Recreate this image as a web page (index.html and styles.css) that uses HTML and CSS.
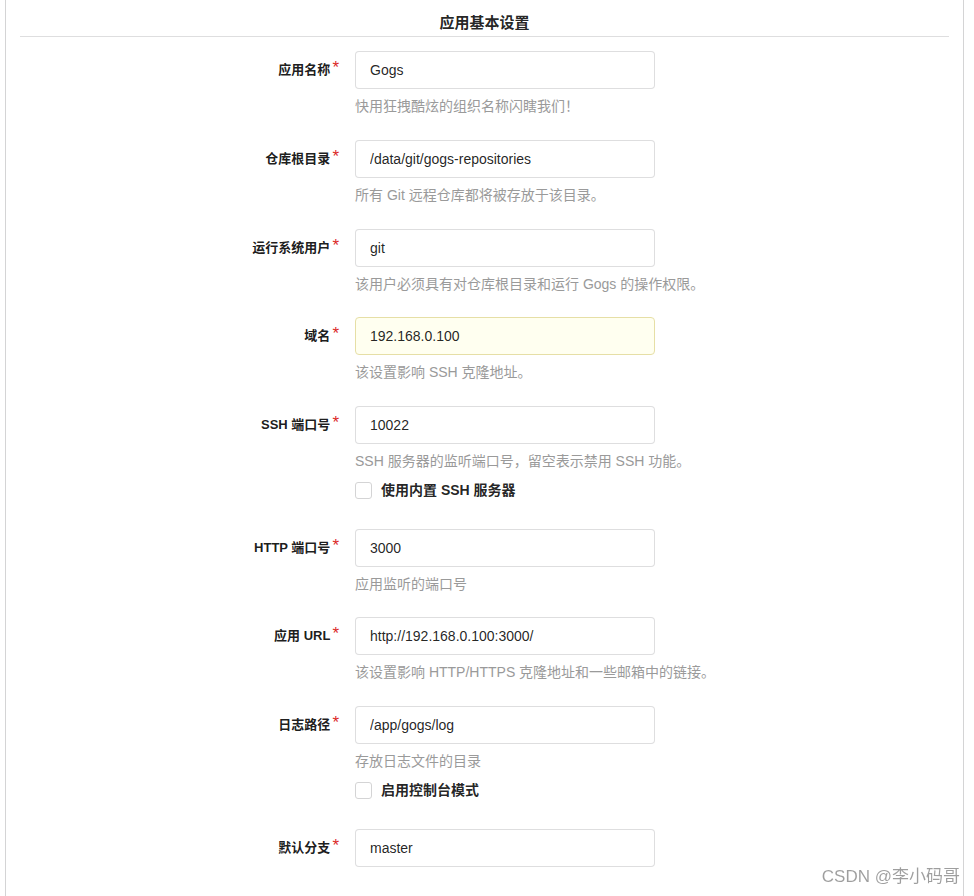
FILE: index.html
```html
<!DOCTYPE html>
<html lang="zh-CN">
<head>
<meta charset="utf-8">
<title>安装 - Gogs</title>
<link rel="stylesheet" href="styles.css">
</head>
<body>
<div class="panel">
  <h3 class="panel-title">应用基本设置</h3>
  <form class="form">
    <div class="field">
      <label class="label">应用名称<span class="req">*</span></label>
      <input class="input" type="text" value="Gogs">
      <span class="help">快用狂拽酷炫的组织名称闪瞎我们！</span>
    </div>
    <div class="field">
      <label class="label">仓库根目录<span class="req">*</span></label>
      <input class="input" type="text" value="/data/git/gogs-repositories">
      <span class="help">所有 Git 远程仓库都将被存放于该目录。</span>
    </div>
    <div class="field">
      <label class="label">运行系统用户<span class="req">*</span></label>
      <input class="input" type="text" value="git">
      <span class="help">该用户必须具有对仓库根目录和运行 Gogs 的操作权限。</span>
    </div>
    <div class="field">
      <label class="label">域名<span class="req">*</span></label>
      <input class="input input-filled" type="text" value="192.168.0.100">
      <span class="help">该设置影响 SSH 克隆地址。</span>
    </div>
    <div class="field">
      <label class="label">SSH 端口号<span class="req">*</span></label>
      <input class="input" type="text" value="10022">
      <span class="help">SSH 服务器的监听端口号，留空表示禁用 SSH 功能。</span>
      <label class="checkbox"><span class="box"></span><span class="check-text">使用内置 SSH 服务器</span></label>
    </div>
    <div class="field">
      <label class="label">HTTP 端口号<span class="req">*</span></label>
      <input class="input" type="text" value="3000">
      <span class="help">应用监听的端口号</span>
    </div>
    <div class="field">
      <label class="label">应用 URL<span class="req">*</span></label>
      <input class="input" type="text" value="http://192.168.0.100:3000/">
      <span class="help">该设置影响 HTTP/HTTPS 克隆地址和一些邮箱中的链接。</span>
    </div>
    <div class="field">
      <label class="label">日志路径<span class="req">*</span></label>
      <input class="input" type="text" value="/app/gogs/log">
      <span class="help">存放日志文件的目录</span>
      <label class="checkbox"><span class="box"></span><span class="check-text">启用控制台模式</span></label>
    </div>
    <div class="field">
      <label class="label">默认分支<span class="req">*</span></label>
      <input class="input" type="text" value="master">
      <span class="help">&nbsp;</span>
    </div>
  </form>
</div>
<div class="watermark">CSDN @李小码哥</div>
</body>
</html>
```
FILE: styles.css
```css
html, body {
  margin: 0;
  padding: 0;
  height: 100%;
  overflow: hidden;
  background: #ffffff;
}

body {
  font-family: "Liberation Sans", "Noto Sans CJK SC", sans-serif;
  font-size: 14px;
  color: rgba(0, 0, 0, 0.87);
}

.panel {
  box-sizing: border-box;
  margin-left: 5px;
  width: 959px;
  height: 100%;
  border-left: 1px solid #d4d4d5;
  border-right: 1px solid #d4d4d5;
  padding: 0 14px;
}

.panel-title {
  margin: 0;
  padding: 12px 0 4px;
  height: 20px;
  line-height: 20px;
  text-align: center;
  font-family: "Noto Sans CJK SC", sans-serif;
  font-size: 15px;
  font-weight: 700;
  color: rgba(0, 0, 0, 0.87);
  border-bottom: 1px solid #dededf;
}

.form {
  padding-top: 14px;
}

.field {
  display: grid;
  grid-template-columns: 319px 1fr;
  column-gap: 16px;
  margin-bottom: 24.75px;
}

.label {
  grid-column: 1;
  grid-row: 1;
  align-self: center;
  text-align: right;
  font-size: 13px;
  font-weight: 700;
  line-height: 18px;
  color: rgba(0, 0, 0, 0.9);
}

.req {
  display: inline-block;
  margin-left: 2px;
  color: #db2828;
  font-size: 17px;
  font-weight: 400;
  vertical-align: 1px;
  line-height: 10px;
}

.input {
  grid-column: 2;
  grid-row: 1;
  box-sizing: border-box;
  width: 300px;
  height: 38px;
  margin: 0;
  padding: 0 14px;
  border: 1px solid rgba(34, 36, 38, 0.15);
  border-radius: 4px;
  background: #ffffff;
  font-family: "Liberation Sans", "Noto Sans CJK SC", sans-serif;
  font-size: 14px;
  color: rgba(0, 0, 0, 0.87);
  outline: none;
}

.input-filled {
  background: #fffff0;
  border-color: #e6dfa6;
}

.help {
  grid-column: 2;
  margin-top: 8px;
  line-height: 18px;
  height: 18px;
  font-size: 14px;
  color: #9a9a9a;
  white-space: nowrap;
}

.checkbox {
  grid-column: 2;
  display: flex;
  align-items: center;
  margin: 12px 0 4.75px;
  height: 17px;
}

.box {
  box-sizing: border-box;
  width: 17px;
  height: 17px;
  border: 1px solid #d4d4d5;
  border-radius: 3px;
  background: #ffffff;
  flex: none;
}

.check-text {
  margin-left: 9px;
  font-size: 14px;
  font-weight: 700;
  line-height: 17px;
  color: rgba(0, 0, 0, 0.87);
}

.watermark {
  position: fixed;
  right: 14px;
  top: 867px;
  font-family: "Liberation Sans", "Noto Sans CJK SC", sans-serif;
  font-size: 17px;
  line-height: 20px;
  color: rgba(0, 0, 0, 0.38);
}
```
